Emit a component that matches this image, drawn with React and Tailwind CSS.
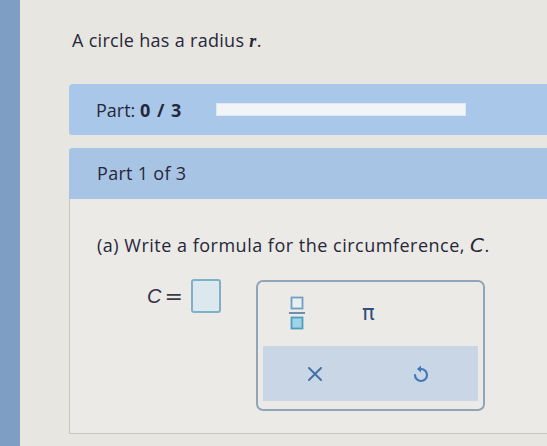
import React from "react";

export default function App() {
  return (
    <div
      className="w-[547px] h-[446px] overflow-hidden flex bg-[#e7e6e1] text-[#27273a]"
      style={{ fontFamily: '"Open Sans", "DejaVu Sans", sans-serif' }}
    >
      <div className="w-[20px] shrink-0 bg-[#7f9ec3]" />
      <div className="flex-1 flex flex-col pl-[49px]">
        <div className="pt-[27px] pl-[3px] h-[84px] text-[18px] leading-[26px] tracking-[0.3px]">
          A circle has a radius{" "}
          <span className="italic font-bold" style={{ fontFamily: '"Liberation Serif", serif' }}>
            r
          </span>
          .
        </div>
        <div className="h-[51px] bg-[#a9c8e9] rounded-tl-[4px] rounded-bl-[3px] flex items-center pl-[27px]">
          <span className="text-[18px] leading-[22px] w-[120px]">
            Part: <span className="font-bold tracking-[1px]">0 / 3</span>
          </span>
          <div className="w-[250px] h-[13px] bg-[#f2f5f7] border border-[#dfe7ef]" />
        </div>
        <div className="h-[13px]" />
        <div className="h-[51px] bg-[#a7c4e4] rounded-tl-[3px] flex items-center pl-[28px] text-[18px] tracking-[0.3px]">
          Part 1 of 3
        </div>
        <div className="h-[235px] border-l border-b border-[#c6c6c2] bg-[#ebeae6] flex flex-col">
          <div className="pt-[33px] pl-[27px] text-[18px] leading-[26px] tracking-[0.5px]">
            (a) Write a formula for the circumference,{" "}
            <span className="italic text-[20px]" style={{ fontFamily: '"DejaVu Sans", sans-serif' }}>
              C
            </span>
            .
          </div>
          <div className="flex items-start mt-[21px]">
            <div className="flex items-center pl-[77px] w-[186px]">
              <span
                className="italic text-[20px] text-[#33334a] mr-[3px]"
                style={{ fontFamily: '"Liberation Sans", sans-serif' }}
              >
                C
              </span>
              <span className="text-[22px] text-[#3a3a4a] mr-[8px]" style={{ fontFamily: '"DejaVu Sans", sans-serif' }}>=</span>
              <div className="w-[30px] h-[34px] border-2 border-[#7fb0c8] bg-[#dbe8ee] rounded-[3px]" />
            </div>
            <div className="w-[229px] h-[131px] mt-[1px] border-2 border-[#8fa5ba] rounded-[7px] bg-[#eceae6] flex flex-col">
              <div className="h-[64px] flex items-center">
                <div className="w-[78px] flex justify-center">
                  <svg width="16" height="36" viewBox="0 0 16 36">
                    <rect x="2.5" y="1.5" width="11" height="11" fill="#e8eef2" stroke="#6fa2c2" strokeWidth="1.8" />
                    <rect x="0" y="16" width="16" height="2" fill="#6f8fae" />
                    <rect x="2.5" y="21.5" width="11" height="11" fill="#9fd3e6" stroke="#4d9fc0" strokeWidth="1.8" />
                  </svg>
                </div>
                <div className="ml-[26px] text-[21px] text-[#2f4f7c]" style={{ fontFamily: '"DejaVu Sans", sans-serif' }}>
                  π
                </div>
              </div>
              <div className="mx-[5px] h-[55px] bg-[#c8d6e5] flex items-center">
                <div className="w-[104px] flex justify-center">
                  <svg width="16" height="16" viewBox="0 0 16 16">
                    <path d="M2 2 L14 14 M14 2 L2 14" stroke="#4670a6" strokeWidth="2" strokeLinecap="round" />
                  </svg>
                </div>
                <div className="w-[108px] flex justify-center">
                  <svg width="18" height="20" viewBox="0 0 18 20">
                    <path d="M8 5 H9 A6 6 0 1 1 3 11" fill="none" stroke="#3f79b8" strokeWidth="2.2" strokeLinecap="round" />
                    <path d="M5 5 L9 1.5 L9 8.5 Z" fill="#3f79b8" />
                  </svg>
                </div>
              </div>
            </div>
          </div>
        </div>
      </div>
    </div>
  );
}
